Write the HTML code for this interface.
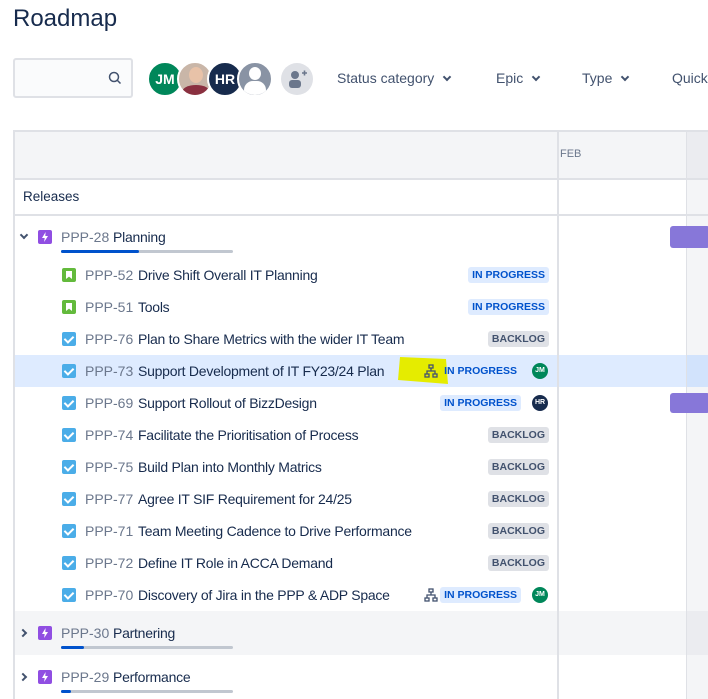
<!DOCTYPE html>
<html><head><meta charset="utf-8"><style>
*{margin:0;padding:0;box-sizing:border-box}
body{width:708px;height:699px;overflow:hidden;background:#fff;font-family:"Liberation Sans",sans-serif;color:#172b4d;position:relative}
.a{position:absolute}
.t{font-size:14px;white-space:nowrap;letter-spacing:-0.25px}
.key{color:#6b778c;font-size:14px;position:absolute;white-space:nowrap}
.loz{position:absolute;height:16px;line-height:16px;font-size:10.5px;font-weight:bold;padding:0 4px;border-radius:3px;white-space:nowrap}
.ip{background:#deebff;color:#0052cc}
.bl{background:#dfe1e6;color:#42526e}
.r1{right:159px}
.r2{right:187px}
.av{position:absolute;border-radius:50%;color:#fff;text-align:center;font-weight:bold}
.chk{position:absolute;width:14px;height:14px;border-radius:2px;background:#4bade8}
.chk:after{content:"";position:absolute;left:4px;top:2px;width:4px;height:7px;border:solid #fff;border-width:0 2px 2px 0;transform:rotate(45deg)}
.sto{position:absolute;width:14px;height:14px;border-radius:2px;background:#63ba3c}
.sto:after{content:"";position:absolute;left:4px;top:3px;width:6px;height:8px;background:#fff;clip-path:polygon(0 0,100% 0,100% 100%,50% 70%,0 100%)}
.epi{position:absolute;width:14px;height:14px;border-radius:2px;background:#904ee2}
.epi:after{content:"";position:absolute;left:4px;top:2px;width:6px;height:10px;background:#fff;clip-path:polygon(60% 0,0 60%,45% 60%,35% 100%,100% 40%,55% 40%)}
.filt{position:absolute;top:70px;font-size:14px;color:#42526e}
.filt span{display:inline-block;width:6px;height:6px;border:solid #42526e;border-width:0 2px 2px 0;transform:rotate(45deg);margin-left:10px;position:relative;top:-3px}
</style></head><body>
<div class="a" style="left:13px;top:5px;font-size:24px;color:#172b4d">Roadmap</div>
<div class="a" style="left:13px;top:58px;width:120px;height:40px;border:2px solid #dfe1e6;border-radius:3px;background:#fafbfc"></div>
<svg class="a" style="left:107px;top:70px" width="16" height="16" viewBox="0 0 16 16"><circle cx="7" cy="7" r="4.5" fill="none" stroke="#42526e" stroke-width="1.5"/><path d="M10.5 10.5L13.5 13.5" stroke="#42526e" stroke-width="1.5"/></svg>
<div class="av" style="left:147px;top:61px;width:36px;height:36px;background:#00875a;border:2px solid #fff;font-size:14px;line-height:32px">JM</div>
<div class="av" style="left:177px;top:61px;width:36px;height:36px;background:#c9b6a8;border:2px solid #fff;overflow:hidden"><div style="position:absolute;left:10px;top:4px;width:14px;height:16px;border-radius:50%;background:#e8c2a8"></div><div style="position:absolute;left:3px;top:22px;width:28px;height:14px;border-radius:50%;background:#8a3040"></div></div>
<div class="av" style="left:207px;top:61px;width:36px;height:36px;background:#172b4d;border:2px solid #fff;font-size:14px;line-height:32px">HR</div>
<div class="av" style="left:237px;top:61px;width:36px;height:36px;background:#8993a4;border:2px solid #fff;overflow:hidden"><div style="position:absolute;left:10px;top:4px;width:12px;height:13px;border-radius:50%;background:#fff"></div><div style="position:absolute;left:5px;top:18px;width:22px;height:16px;border-radius:9px 9px 4px 4px;background:#fff"></div></div>
<div class="av" style="left:281px;top:63px;width:32px;height:32px;background:#dfe1e6"><svg width="32" height="32" viewBox="0 0 32 32"><circle cx="14" cy="12" r="4" fill="#6b778c"/><rect x="8" y="17" width="12" height="8" rx="3" fill="#6b778c"/><path d="M21 10h5M23.5 7.5v5" stroke="#6b778c" stroke-width="1.6"/></svg></div>
<div class="filt" style="left:337px">Status category<span></span></div>
<div class="filt" style="left:496px">Epic<span></span></div>
<div class="filt" style="left:582px">Type<span></span></div>
<div class="filt" style="left:672px">Quick</div>

<div class="a" style="left:13px;top:130px;width:695px;height:569px;border-left:2px solid #dfe1e6;border-top:2px solid #dfe1e6"></div>
<div class="a" style="left:15px;top:132px;width:693px;height:46px;background:#f4f5f7"></div>
<div class="a" style="left:686px;top:132px;width:22px;height:46px;background:#ebecf0"></div>
<div class="a" style="left:686px;top:178px;width:22px;height:521px;background:#f4f5f7"></div>
<div class="a" style="left:15px;top:178px;width:693px;height:2px;background:#dfe1e6"></div>
<div class="a" style="left:15px;top:214px;width:693px;height:2px;background:#dfe1e6"></div>
<div class="a" style="left:15px;top:355px;width:693px;height:32px;background:#deebff"></div>
<div class="a" style="left:686px;top:355px;width:22px;height:32px;background:#d2e3fc"></div>
<div class="a" style="left:15px;top:611px;width:693px;height:44px;background:#f4f5f7"></div>
<div class="a" style="left:686px;top:611px;width:22px;height:44px;background:#ebecf0"></div>
<div class="a" style="left:557px;top:132px;width:2px;height:567px;background:#dfe1e6"></div>
<div class="a" style="left:686px;top:132px;width:1px;height:567px;background:#dfe1e6"></div>
<div class="a" style="left:560px;top:148px;font-size:11px;color:#6b778c">FEB</div>
<div class="a t" style="left:23px;top:189px;font-size:13.5px;font-weight:normal;letter-spacing:0">Releases</div>
<div class="a" style="left:670px;top:226px;width:40px;height:22px;background:#8777d9;border-radius:3px"></div>
<div class="a" style="left:670px;top:393px;width:40px;height:20px;background:#8777d9;border-radius:3px"></div>

<div class="a" style="left:21px;top:232px;width:6px;height:6px;border:solid #42526e;border-width:0 2px 2px 0;transform:rotate(45deg)"></div>
<div class="epi" style="left:38px;top:230px"></div>
<div class="key" style="left:61px;top:229px">PPP-28</div><div class="a t" style="left:113px;top:229px">Planning</div>
<div class="a" style="left:61px;top:250px;width:172px;height:3px;background:#c1c7d0;border-radius:2px"><div style="width:78px;height:3px;background:#0052cc;border-radius:2px"></div></div>

<div class="sto" style="left:62px;top:268px"></div><div class="key" style="left:85px;top:267px">PPP-52</div><div class="a t" style="left:138px;top:267px">Drive Shift Overall IT Planning</div><div class="loz ip r1" style="top:267px">IN PROGRESS</div>
<div class="sto" style="left:62px;top:300px"></div><div class="key" style="left:85px;top:299px">PPP-51</div><div class="a t" style="left:138px;top:299px">Tools</div><div class="loz ip r1" style="top:299px">IN PROGRESS</div>
<div class="chk" style="left:62px;top:332px"></div><div class="key" style="left:85px;top:331px">PPP-76</div><div class="a t" style="left:138px;top:331px">Plan to Share Metrics with the wider IT Team</div><div class="loz bl r1" style="top:331px">BACKLOG</div>
<svg class="a" style="left:396px;top:356px" width="56" height="30"><polygon points="4,1 50,3 52,28 2,24" fill="#e5ec00"/></svg>
<svg class="a" style="left:424px;top:364px" width="14" height="14" viewBox="0 0 14 14" fill="none" stroke="#42526e" stroke-width="1.3"><rect x="5" y="1" width="4" height="3"/><rect x="1" y="10" width="4" height="3"/><rect x="9" y="10" width="4" height="3"/><path d="M7 4v3M3 10V7h8v3"/></svg>
<div class="chk" style="left:62px;top:364px"></div><div class="key" style="left:85px;top:363px">PPP-73</div><div class="a t" style="left:138px;top:363px">Support Development of IT FY23/24 Plan</div><div class="loz r2" style="top:363px;color:#0052cc">IN PROGRESS</div><div class="av" style="left:532px;top:363px;width:16px;height:16px;background:#00875a;font-size:7px;line-height:16px">JM</div>
<div class="chk" style="left:62px;top:396px"></div><div class="key" style="left:85px;top:395px">PPP-69</div><div class="a t" style="left:138px;top:395px">Support Rollout of BizzDesign</div><div class="loz ip r2" style="top:395px">IN PROGRESS</div><div class="av" style="left:532px;top:395px;width:16px;height:16px;background:#172b4d;font-size:7px;line-height:16px">HR</div>
<div class="chk" style="left:62px;top:428px"></div><div class="key" style="left:85px;top:427px">PPP-74</div><div class="a t" style="left:138px;top:427px">Facilitate the Prioritisation of Process</div><div class="loz bl r1" style="top:427px">BACKLOG</div>
<div class="chk" style="left:62px;top:460px"></div><div class="key" style="left:85px;top:459px">PPP-75</div><div class="a t" style="left:138px;top:459px">Build Plan into Monthly Matrics</div><div class="loz bl r1" style="top:459px">BACKLOG</div>
<div class="chk" style="left:62px;top:492px"></div><div class="key" style="left:85px;top:491px">PPP-77</div><div class="a t" style="left:138px;top:491px">Agree IT SIF Requirement for 24/25</div><div class="loz bl r1" style="top:491px">BACKLOG</div>
<div class="chk" style="left:62px;top:524px"></div><div class="key" style="left:85px;top:523px">PPP-71</div><div class="a t" style="left:138px;top:523px">Team Meeting Cadence to Drive Performance</div><div class="loz bl r1" style="top:523px">BACKLOG</div>
<div class="chk" style="left:62px;top:556px"></div><div class="key" style="left:85px;top:555px">PPP-72</div><div class="a t" style="left:138px;top:555px">Define IT Role in ACCA Demand</div><div class="loz bl r1" style="top:555px">BACKLOG</div>
<svg class="a" style="left:424px;top:588px" width="14" height="14" viewBox="0 0 14 14" fill="none" stroke="#42526e" stroke-width="1.3"><rect x="5" y="1" width="4" height="3"/><rect x="1" y="10" width="4" height="3"/><rect x="9" y="10" width="4" height="3"/><path d="M7 4v3M3 10V7h8v3"/></svg>
<div class="chk" style="left:62px;top:588px"></div><div class="key" style="left:85px;top:587px">PPP-70</div><div class="a t" style="left:138px;top:587px">Discovery of Jira in the PPP &amp; ADP Space</div><div class="loz ip r2" style="top:587px">IN PROGRESS</div><div class="av" style="left:532px;top:587px;width:16px;height:16px;background:#00875a;font-size:7px;line-height:16px">JM</div>

<div class="a" style="left:20px;top:630px;width:6px;height:6px;border:solid #42526e;border-width:2px 2px 0 0;transform:rotate(45deg)"></div>
<div class="epi" style="left:38px;top:626px"></div>
<div class="key" style="left:61px;top:625px">PPP-30</div><div class="a t" style="left:113px;top:625px">Partnering</div>
<div class="a" style="left:61px;top:646px;width:172px;height:3px;background:#c1c7d0;border-radius:2px"><div style="width:23px;height:3px;background:#0052cc;border-radius:2px"></div></div>
<div class="a" style="left:20px;top:674px;width:6px;height:6px;border:solid #42526e;border-width:2px 2px 0 0;transform:rotate(45deg)"></div>
<div class="epi" style="left:38px;top:670px"></div>
<div class="key" style="left:61px;top:669px">PPP-29</div><div class="a t" style="left:113px;top:669px">Performance</div>
<div class="a" style="left:61px;top:690px;width:172px;height:3px;background:#c1c7d0;border-radius:2px"><div style="width:10px;height:3px;background:#0052cc;border-radius:2px"></div></div>
</body></html>
